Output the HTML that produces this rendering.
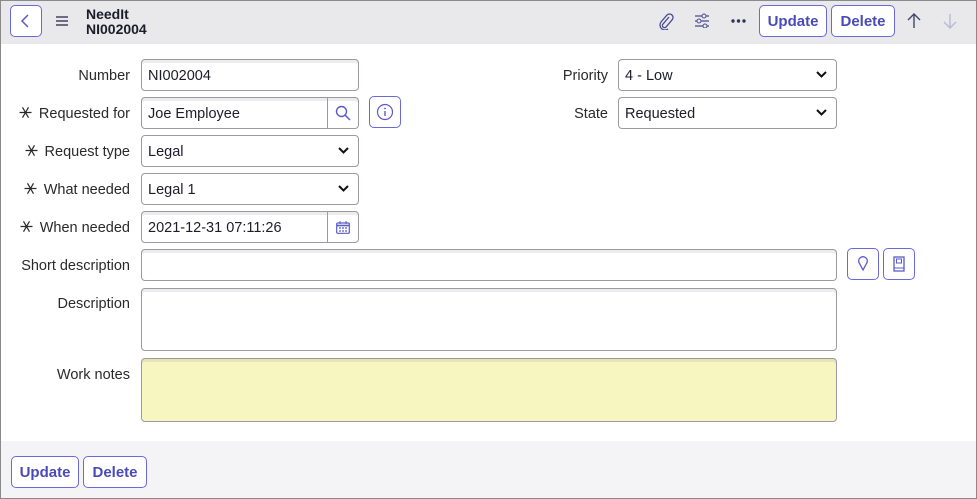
<!DOCTYPE html>
<html><head><meta charset="utf-8"><style>
*{box-sizing:border-box;margin:0;padding:0}
body{width:977px;height:499px;overflow:hidden;background:#fff;font-family:"Liberation Sans",sans-serif;color:#1c1c2a;position:relative}
.frame{position:absolute;left:0;top:0;width:977px;height:499px;border:1px solid #8a8a8a;pointer-events:none;z-index:10}
.hdr{position:absolute;left:0;top:0;width:977px;height:44px;background:#e9e9ec}
.ftr{position:absolute;left:0;top:441px;width:977px;height:58px;background:#f4f4f6}
.btn{position:absolute;border:1.5px solid #6a6ad6;border-radius:5px;background:#fff;color:#4a4ab8;font-weight:bold;font-size:15px;display:flex;align-items:center;justify-content:center}
.lbl{position:absolute;right:847px;font-size:14.5px;line-height:17px;color:#2a2a2a;white-space:nowrap;text-align:right;margin-top:2px}
.ast{margin-right:7px;display:inline-block;width:13px;height:13px;vertical-align:-1px}
.in{position:absolute;border:1px solid #9a9aa6;border-radius:4px;background:#fff;font-size:14.5px;padding-left:6px;padding-top:2px;display:flex;align-items:center;box-shadow:inset 0 3px 0 #ececec}
.sel{box-shadow:none;background:#fff}
.chev{position:absolute;right:9px;top:11px}
.side{position:absolute;top:0;right:0;width:31px;height:100%;border-left:1px solid #9a9aa6;display:flex;align-items:center;justify-content:center}
</style></head><body>
<div class="hdr"></div>
<div class="ftr"></div>
<div class="btn" style="left:10px;top:5px;width:32px;height:32px"><svg width="12" height="14" viewBox="0 0 12 14"><path d="M8 1L2 7l6 6" fill="none" stroke="#5a5ac8" stroke-width="1.5"/></svg></div>
<svg style="position:absolute;left:56px;top:16px" width="13" height="10"><path d="M0 1h12M0 5h12M0 9h12" stroke="#44445a" stroke-width="1.4"/></svg>
<div style="position:absolute;left:86px;top:7px;font-weight:bold;font-size:14px;line-height:15px;color:#1c1c2a">NeedIt<br>NI002004</div>
<svg style="position:absolute;left:658px;top:12px" width="16" height="18" viewBox="0 0 16 18"><path d="M11 5L5 12a2 2 0 0 0 3 3l6-7a3.5 3.5 0 0 0-5-5L3 10a5 5 0 0 0 7 7" fill="none" stroke="#4a4a90" stroke-width="1.3"/></svg>
<svg style="position:absolute;left:695px;top:13px" width="15" height="15"><path d="M0 3h14M0 8h14M0 13h14" stroke="#4a4a90" stroke-width="1.2"/><circle cx="9" cy="3" r="2" fill="#e9e9ec" stroke="#4a4a90"/><circle cx="4" cy="8" r="2" fill="#e9e9ec" stroke="#4a4a90"/><circle cx="10" cy="13" r="2" fill="#e9e9ec" stroke="#4a4a90"/></svg>
<svg style="position:absolute;left:731px;top:19px" width="15" height="4"><circle cx="2" cy="2" r="1.7" fill="#33335a"/><circle cx="7.5" cy="2" r="1.7" fill="#33335a"/><circle cx="13" cy="2" r="1.7" fill="#33335a"/></svg>
<div class="btn" style="left:759px;top:5px;width:68px;height:32px">Update</div>
<div class="btn" style="left:831px;top:5px;width:64px;height:32px">Delete</div>
<svg style="position:absolute;left:907px;top:13px" width="14" height="16"><path d="M7 15V1M1 7l6-6 6 6" fill="none" stroke="#44446a" stroke-width="1.4"/></svg>
<svg style="position:absolute;left:943px;top:13px" width="14" height="16"><path d="M7 1v14M1 9l6 6 6-6" fill="none" stroke="#b8b8d8" stroke-width="1.4"/></svg>

<svg width="0" height="0" style="position:absolute"><defs><g id="a"><path d="M0.5 6.5h12M3.5 1.3l6 10.4M3.5 11.7l6-10.4" stroke="#2a2a2a" stroke-width="1.2"/></g></defs></svg>

<div class="lbl" style="top:66px">Number</div>
<div class="in" style="left:141px;top:59px;width:218px;height:32px">NI002004</div>
<div class="lbl" style="top:104px"><svg class="ast"><use href="#a"/></svg>Requested for</div>
<div class="in" style="left:141px;top:97px;width:218px;height:32px">Joe Employee<div class="side"><svg width="16" height="16"><circle cx="6.5" cy="6.5" r="5" fill="none" stroke="#5a5ac8" stroke-width="1.4"/><path d="M10 10l5 5" stroke="#5a5ac8" stroke-width="1.5"/></svg></div></div>
<div class="btn" style="left:369px;top:96px;width:32px;height:32px"><svg width="18" height="18"><circle cx="9" cy="9" r="7.5" fill="none" stroke="#5a5ac8" stroke-width="1.2"/><path d="M9 8v5" stroke="#5a5ac8" stroke-width="1.4"/><circle cx="9" cy="5.5" r="0.9" fill="#5a5ac8"/></svg></div>
<div class="lbl" style="top:142px"><svg class="ast"><use href="#a"/></svg>Request type</div>
<div class="in sel" style="left:141px;top:135px;width:218px;height:32px">Legal<svg class="chev" width="11" height="8"><path d="M1 1l4.5 4.5L10 1" fill="none" stroke="#111" stroke-width="2"/></svg></div>
<div class="lbl" style="top:180px"><svg class="ast"><use href="#a"/></svg>What needed</div>
<div class="in sel" style="left:141px;top:173px;width:218px;height:32px">Legal 1<svg class="chev" width="11" height="8"><path d="M1 1l4.5 4.5L10 1" fill="none" stroke="#111" stroke-width="2"/></svg></div>
<div class="lbl" style="top:218px"><svg class="ast"><use href="#a"/></svg>When needed</div>
<div class="in" style="left:141px;top:211px;width:218px;height:32px">2021-12-31 07:11:26<div class="side"><svg width="14" height="13"><rect x="0.7" y="2" width="12.6" height="10.3" rx="1" fill="none" stroke="#5a5ac8" stroke-width="1.2"/><path d="M0.7 4.5h12.6" stroke="#5a5ac8" stroke-width="1.6"/><path d="M4 0v3M10 0v3" stroke="#5a5ac8"/><path d="M3 7h2M6 7h2M9 7h2M3 10h2M6 10h2M9 10h2" stroke="#5a5ac8" stroke-width="1.3"/></svg></div></div>
<div class="lbl" style="top:256px">Short description</div>
<div class="in" style="left:141px;top:249px;width:696px;height:32px"></div>
<div class="btn" style="left:847px;top:248px;width:32px;height:32px"><svg width="12" height="18"><path d="M6 15L2.5 8.5A4.3 4.3 0 1 1 9.5 8.5Z" fill="none" stroke="#5a5ac8" stroke-width="1.3"/></svg></div>
<div class="btn" style="left:883px;top:248px;width:32px;height:32px"><svg width="12" height="16"><rect x="1" y="1" width="10" height="14" fill="none" stroke="#5a5ac8" stroke-width="1.3"/><rect x="3.5" y="3" width="5" height="4" fill="none" stroke="#5a5ac8"/><path d="M1 12h10" stroke="#5a5ac8"/></svg></div>
<div class="lbl" style="top:294px">Description</div>
<div class="in" style="left:141px;top:288px;width:696px;height:63px"></div>
<div class="lbl" style="top:365px">Work notes</div>
<div class="in" style="left:141px;top:358px;width:696px;height:64px;background:#f8f6c0;box-shadow:inset 0 3px 0 #e6e4b4"></div>

<div class="lbl" style="right:369px;top:66px">Priority</div>
<div class="in sel" style="left:618px;top:59px;width:219px;height:32px">4 - Low<svg class="chev" width="11" height="8"><path d="M1 1l4.5 4.5L10 1" fill="none" stroke="#111" stroke-width="2"/></svg></div>
<div class="lbl" style="right:369px;top:104px">State</div>
<div class="in sel" style="left:618px;top:97px;width:219px;height:32px">Requested<svg class="chev" width="11" height="8"><path d="M1 1l4.5 4.5L10 1" fill="none" stroke="#111" stroke-width="2"/></svg></div>

<div class="btn" style="left:11px;top:456px;width:68px;height:32px">Update</div>
<div class="btn" style="left:83px;top:456px;width:64px;height:32px">Delete</div>
<div class="frame"></div>
</body></html>
